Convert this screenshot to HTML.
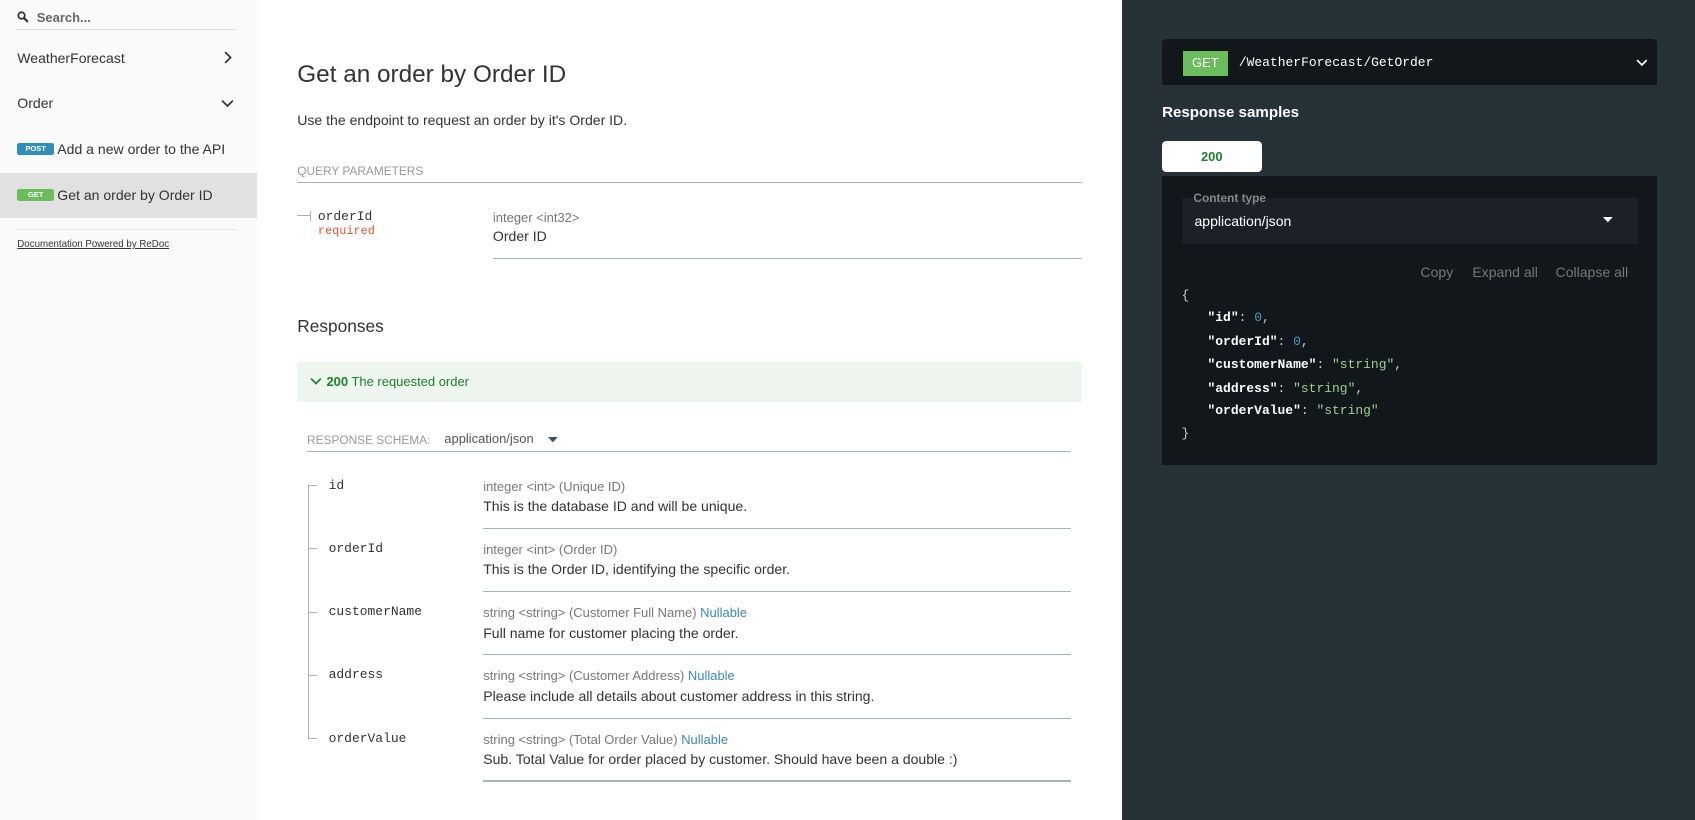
<!DOCTYPE html>
<html><head><meta charset="utf-8"><style>
html{zoom:1.081}
*{margin:0;padding:0;box-sizing:border-box}
body{width:1568px;height:759px;overflow:hidden;font-family:"Liberation Sans",sans-serif;background:#fff;position:relative}
.a{position:absolute;white-space:nowrap}
.mono{font-family:"Liberation Mono",monospace}
.side{left:0;top:0;width:238px;height:759px;background:#fafafa}
.right{left:1038px;top:0;width:530px;height:759px;background:#263238}
.badge{font-size:7px;font-weight:bold;color:#fff;border-radius:2px;text-align:center;line-height:11px;height:11px}
.hr{height:1px;background:#a6b3bb}
.t{font-size:12px;color:#777}
.d{font-size:13px;color:#333}
.nm{font-size:12px;color:#333}
.nl{color:#3a8ab3}
.j{font-family:"Liberation Mono",monospace;font-size:12px;color:#ccc}
.j b{color:#fff}
.num{color:#4a9bc6}
.str{color:#9bd28f}
</style></head><body>
<div class="a side"></div>
<svg class="a" style="left:16px;top:10px" width="11" height="11" viewBox="0 0 11 11"><circle cx="4.2" cy="4.2" r="3" fill="none" stroke="#333" stroke-width="1.6"/><path d="M6.3 6.3L10 10" stroke="#333" stroke-width="2"/></svg>
<div class="a" style="left:34px;top:9px;font-size:12px;font-weight:bold;color:#666">Search...</div>
<div class="a" style="left:16px;top:27px;width:202px;height:1px;background:#ddd"></div>
<div class="a" style="left:16px;top:46px;font-size:13px;color:#333">WeatherForecast</div>
<svg class="a" style="left:206px;top:47px" width="9" height="12"><path d="M2 1l5 5-5 5" fill="none" stroke="#333" stroke-width="1.6"/></svg>
<div class="a" style="left:16px;top:88px;font-size:13px;color:#333">Order</div>
<svg class="a" style="left:204px;top:92px" width="12" height="8"><path d="M1 1.5l5 5 5-5" fill="none" stroke="#333" stroke-width="1.6"/></svg>
<div class="a badge" style="left:16px;top:132px;width:34px;background:#2f8fb8">POST</div>
<div class="a" style="left:53px;top:130px;font-size:13px;color:#333">Add a new order to the API</div>
<div class="a" style="left:0;top:160px;width:238px;height:42px;background:#e1e1e1"></div>
<div class="a badge" style="left:16px;top:175px;width:34px;background:#6bbd5b">GET</div>
<div class="a" style="left:53px;top:173px;font-size:13px;color:#333">Get an order by Order ID</div>
<div class="a" style="left:16px;top:212px;width:202px;height:1px;background:#e4e4e4"></div>
<div class="a" style="left:16px;top:221px;font-size:9px;color:#333;text-decoration:underline">Documentation Powered by ReDoc</div>

<div class="a" style="left:275px;top:56px;font-size:22.5px;color:#333;font-weight:300">Get an order by Order ID</div>
<div class="a" style="left:275px;top:104px;font-size:13px;color:#333">Use the endpoint to request an order by it's Order ID.</div>
<div class="a" style="left:275px;top:152px;font-size:11px;color:#999">QUERY PARAMETERS</div>
<div class="a hr" style="left:275px;top:168px;width:726px"></div>
<div class="a" style="left:275px;top:199px;width:12px;height:1px;background:#a6b3bb"></div>
<div class="a" style="left:287px;top:195px;width:1px;height:9px;background:#a6b3bb"></div>
<div class="a mono nm" style="left:294px;top:193px">orderId</div>
<div class="a mono" style="left:294px;top:207px;font-size:11px;color:#e15230">required</div>
<div class="a t" style="left:456px;top:194px">integer &lt;int32&gt;</div>
<div class="a d" style="left:456px;top:211px">Order ID</div>
<div class="a hr" style="left:456px;top:239px;width:545px"></div>

<div class="a" style="left:275px;top:292px;font-size:16px;color:#333">Responses</div>
<div class="a" style="left:275px;top:335px;width:726px;height:37px;background:#edf5ee"></div>
<svg class="a" style="left:287px;top:349px" width="11" height="8"><path d="M1 1.5l4.5 4.5 4.5-4.5" fill="none" stroke="#1d8127" stroke-width="1.6"/></svg>
<div class="a" style="left:302px;top:346px;font-size:12px;color:#1d8127"><b>200</b> The requested order</div>
<div class="a" style="left:284px;top:401px;font-size:11px;color:#999">RESPONSE SCHEMA:</div>
<div class="a" style="left:411px;top:399px;font-size:12px;color:#555">application/json</div>
<svg class="a" style="left:507px;top:404px" width="9" height="5"><path d="M0 0h9L4.5 5z" fill="#35536b"/></svg>
<div class="a hr" style="left:284px;top:417px;width:707px"></div>
<div class="a" style="left:285px;top:449px;width:1px;height:234px;background:#a6b3bb"></div>

<div class="a" style="left:285px;top:449px;width:8px;height:1px;background:#a6b3bb"></div>
<div class="a mono nm" style="left:304px;top:442px">id</div>
<div class="a t" style="left:447px;top:443px">integer &lt;int&gt; (Unique ID)</div>
<div class="a d" style="left:447px;top:461px">This is the database ID and will be unique.</div>
<div class="a hr" style="left:447px;top:488px;width:544px"></div>

<div class="a" style="left:285px;top:507px;width:8px;height:1px;background:#a6b3bb"></div>
<div class="a mono nm" style="left:304px;top:500px">orderId</div>
<div class="a t" style="left:447px;top:501px">integer &lt;int&gt; (Order ID)</div>
<div class="a d" style="left:447px;top:519px">This is the Order ID, identifying the specific order.</div>
<div class="a hr" style="left:447px;top:547px;width:544px"></div>

<div class="a" style="left:285px;top:566px;width:8px;height:1px;background:#a6b3bb"></div>
<div class="a mono nm" style="left:304px;top:559px">customerName</div>
<div class="a t" style="left:447px;top:560px">string &lt;string&gt; (Customer Full Name) <span class="nl">Nullable</span></div>
<div class="a d" style="left:447px;top:578px">Full name for customer placing the order.</div>
<div class="a hr" style="left:447px;top:605px;width:544px"></div>

<div class="a" style="left:285px;top:624px;width:8px;height:1px;background:#a6b3bb"></div>
<div class="a mono nm" style="left:304px;top:617px">address</div>
<div class="a t" style="left:447px;top:618px">string &lt;string&gt; (Customer Address) <span class="nl">Nullable</span></div>
<div class="a d" style="left:447px;top:636px">Please include all details about customer address in this string.</div>
<div class="a hr" style="left:447px;top:664px;width:544px"></div>

<div class="a" style="left:285px;top:683px;width:8px;height:1px;background:#a6b3bb"></div>
<div class="a mono nm" style="left:304px;top:676px">orderValue</div>
<div class="a t" style="left:447px;top:677px">string &lt;string&gt; (Total Order Value) <span class="nl">Nullable</span></div>
<div class="a d" style="left:447px;top:695px">Sub. Total Value for order placed by customer. Should have been a double :)</div>
<div class="a hr" style="left:447px;top:722px;width:544px"></div>

<div class="a right"></div>
<div class="a" style="left:1075px;top:36px;width:458px;height:43px;background:#11171a;border-radius:4px 4px 0 0"></div>
<div class="a" style="left:1094px;top:47px;width:42px;height:23px;background:#6bbd5b;color:#fff;font-size:12px;text-align:center;line-height:23px">GET</div>
<div class="a mono" style="left:1146px;top:51px;font-size:12px;color:#fff">/WeatherForecast/GetOrder</div>
<svg class="a" style="left:1513px;top:55px" width="11" height="7"><path d="M1 1l4.5 4.5 4.5-4.5" fill="none" stroke="#fff" stroke-width="1.6"/></svg>
<div class="a" style="left:1075px;top:96px;font-size:14px;font-weight:bold;color:#fff">Response samples</div>
<div class="a" style="left:1075px;top:130px;width:92px;height:29px;background:#fff;border-radius:4px;text-align:center;line-height:29px;font-size:12px;font-weight:bold;color:#1d8127">200</div>
<div class="a" style="left:1075px;top:163px;width:458px;height:267px;background:#11171a"></div>
<div class="a" style="left:1093px;top:183px;width:422px;height:43px;background:#1b2126"></div>
<div class="a" style="left:1104px;top:177px;font-size:11px;font-weight:bold;color:#888">Content type</div>
<div class="a" style="left:1105px;top:197px;font-size:13px;color:#fff">application/json</div>
<svg class="a" style="left:1483px;top:201px" width="9" height="5"><path d="M0 0h9L4.5 5z" fill="#fff"/></svg>
<div class="a" style="left:1314px;top:244px;font-size:13px;color:#777">Copy</div>
<div class="a" style="left:1362px;top:244px;font-size:13px;color:#777">Expand all</div>
<div class="a" style="left:1439px;top:244px;font-size:13px;color:#777">Collapse all</div>
<div class="a j" style="left:1093px;top:266px">{</div>
<div class="a j" style="left:1117px;top:287px"><b>"id"</b>: <span class="num">0</span>,</div>
<div class="a j" style="left:1117px;top:309px"><b>"orderId"</b>: <span class="num">0</span>,</div>
<div class="a j" style="left:1117px;top:330px"><b>"customerName"</b>: <span class="str">"string"</span>,</div>
<div class="a j" style="left:1117px;top:352px"><b>"address"</b>: <span class="str">"string"</span>,</div>
<div class="a j" style="left:1117px;top:373px"><b>"orderValue"</b>: <span class="str">"string"</span></div>
<div class="a j" style="left:1093px;top:394px">}</div>
</body></html>
